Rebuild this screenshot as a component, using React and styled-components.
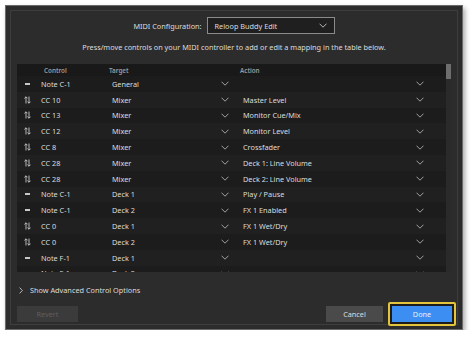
import React from 'react'
import styled, { createGlobalStyle } from 'styled-components'

const rowHeight = 15.8
const textSize = '7.3px'

const rows = [
  { kind: 'note', control: 'Note C-1', target: 'General', action: '' },
  { kind: 'cc', control: 'CC 10', target: 'Mixer', action: 'Master Level' },
  { kind: 'cc', control: 'CC 13', target: 'Mixer', action: 'Monitor Cue/Mix' },
  { kind: 'cc', control: 'CC 12', target: 'Mixer', action: 'Monitor Level' },
  { kind: 'cc', control: 'CC 8', target: 'Mixer', action: 'Crossfader' },
  { kind: 'cc', control: 'CC 28', target: 'Mixer', action: 'Deck 1: Line Volume' },
  { kind: 'cc', control: 'CC 28', target: 'Mixer', action: 'Deck 2: Line Volume' },
  { kind: 'note', control: 'Note C-1', target: 'Deck 1', action: 'Play / Pause' },
  { kind: 'note', control: 'Note C-1', target: 'Deck 2', action: 'FX 1 Enabled' },
  { kind: 'cc', control: 'CC 0', target: 'Deck 1', action: 'FX 1 Wet/Dry' },
  { kind: 'cc', control: 'CC 0', target: 'Deck 2', action: 'FX 1 Wet/Dry' },
  { kind: 'note', control: 'Note F-1', target: 'Deck 1', action: '' },
  { kind: 'note', control: 'Note F-1', target: 'Deck 2', action: '' },
]

const GlobalStyle = createGlobalStyle`
  html, body {
    margin: 0;
    background: #ffffff;
  }
  body {
    font-family: "Noto Sans", "Open Sans", sans-serif;
  }
`

const Page = styled.div`
  padding: 5px 0 0 5px;
`

const Window = styled.div`
  box-sizing: border-box;
  width: 458px;
  height: 325px;
  padding: 4px;
  background: #2c2c2c;
  border: 1px solid #6a6a6a;
  box-shadow: 2px 3px 5px rgba(0, 0, 0, 0.35);
`

const Frame = styled.div`
  box-sizing: border-box;
  height: 100%;
  border: 1px solid #3e3e3e;
  padding: 6px 6px 0 6px;
  display: flex;
  flex-direction: column;
  color: #dcdcdc;
`

const ConfigRow = styled.div`
  display: flex;
  justify-content: center;
  align-items: center;
  gap: 5px;
  font-size: ${textSize};
`

const Select = styled.div`
  box-sizing: border-box;
  width: 128px;
  height: 17px;
  border: 1px solid #8a8a8a;
  background: #1f1f1f;
  display: flex;
  align-items: center;
  justify-content: space-between;
  padding: 0 7px 0 7px;
  font-size: ${textSize};
`

const Hint = styled.div`
  margin-top: 8px;
  text-align: center;
  font-size: ${textSize};
  line-height: 11px;
`

const Table = styled.div`
  flex: none;
  margin-top: 11px;
  height: 208px;
  display: flex;
  background: #1d1d1d;
  overflow: hidden;
`

const TableBody = styled.div`
  flex: 1;
  display: flex;
  flex-direction: column;
`

const HeaderRow = styled.div`
  display: grid;
  grid-template-columns: 24px 65px 131px 1fr;
  height: 12px;
  flex: none;
  align-items: center;
  background: #191919;
  color: #9a9a9a;
  font-size: 6.3px;
  font-weight: 600;
  padding-left: 3px;
`

const Row = styled.div`
  display: grid;
  grid-template-columns: 24px 71px 117px 14px 181px 1fr;
  height: ${rowHeight}px;
  flex: none;
  align-items: center;
  font-size: ${textSize};
  background: ${p => (p.$odd ? '#202020' : '#1c1c1c')};
`

const IconCell = styled.div`
  display: flex;
  padding-left: 7px;
`

const PickCell = styled.div`
  display: flex;
  align-items: center;
  justify-content: space-between;
  white-space: nowrap;
`

const Scrollbar = styled.div`
  width: 5px;
  background: #2a2a2a;
`

const Thumb = styled.div`
  height: 15px;
  background: #6e6e6e;
`

const Advanced = styled.div`
  margin-top: 13px;
  display: flex;
  align-items: center;
  gap: 7px;
  font-size: ${textSize};
  padding-left: 2px;
`

const Buttons = styled.div`
  margin-top: 7px;
  margin-right: -5px;
  display: flex;
  align-items: center;
`

const Button = styled.div`
  box-sizing: border-box;
  width: ${p => p.$w}px;
  height: 16px;
  display: flex;
  align-items: center;
  justify-content: center;
  font-size: ${textSize};
  background: ${p => p.$bg};
  color: ${p => p.$fg};
`

const Focus = styled.div`
  margin-left: 5px;
  padding: 2px;
  border: 2px solid #e3c43c;
  border-radius: 2px;
  background: #1c1c1c;
`

const Spacer = styled.div`
  flex: 1;
`

function Chevron({ color = '#b0b0b0' }) {
  return (
    <svg width="8" height="5" viewBox="0 0 8 5">
      <path d="M0.5 0.7 L4 4.2 L7.5 0.7" fill="none" stroke={color} strokeWidth="0.9" />
    </svg>
  )
}

function RightChevron() {
  return (
    <svg width="4" height="7" viewBox="0 0 4 7">
      <path d="M0.6 0.6 L3.4 3.5 L0.6 6.4" fill="none" stroke="#c8c8c8" strokeWidth="0.9" />
    </svg>
  )
}

function KindIcon({ kind }) {
  if (kind === 'note') {
    return (
      <svg width="7" height="6" viewBox="0 0 7 6">
        <rect x="1" y="2" width="5" height="2" fill="#c8c8c8" />
      </svg>
    )
  }
  return (
    <svg width="7" height="8" viewBox="0 0 7 8">
      <path d="M2 7.5 V0.8 M0.4 2.4 L2 0.8 L3.6 2.4" fill="none" stroke="#c8c8c8" strokeWidth="0.9" />
      <path d="M5 0.5 V7.2 M3.4 5.6 L5 7.2 L6.6 5.6" fill="none" stroke="#c8c8c8" strokeWidth="0.9" />
    </svg>
  )
}

export default function App() {
  return (
    <Page>
      <GlobalStyle />
      <Window>
        <Frame>
          <ConfigRow>
            <span>MIDI Configuration:</span>
            <Select>
              <span>Reloop Buddy Edit</span>
              <Chevron color="#c8c8c8" />
            </Select>
          </ConfigRow>

          <Hint>Press/move controls on your MIDI controller to add or edit a mapping in the table below.</Hint>

          <Table>
            <TableBody>
              <HeaderRow>
                <span />
                <span>Control</span>
                <span>Target</span>
                <span>Action</span>
              </HeaderRow>
              {rows.map((r, i) => (
                <Row key={i} $odd={i % 2 === 1}>
                  <IconCell>
                    <KindIcon kind={r.kind} />
                  </IconCell>
                  <span>{r.control}</span>
                  <PickCell>
                    <span>{r.target}</span>
                    <Chevron />
                  </PickCell>
                  <span />
                  <PickCell>
                    <span>{r.action}</span>
                    <Chevron />
                  </PickCell>
                  <span />
                </Row>
              ))}
            </TableBody>
            <Scrollbar>
              <Thumb />
            </Scrollbar>
          </Table>

          <Advanced>
            <RightChevron />
            <span>Show Advanced Control Options</span>
          </Advanced>

          <Buttons>
            <Button $w={61} $bg="#3b3b3b" $fg="#5e5e5e">Revert</Button>
            <Spacer />
            <Button $w={57} $bg="#4a4a4a" $fg="#dedede">Cancel</Button>
            <Focus>
              <Button $w={60} $bg="#3d8ef2" $fg="#e8f1ff">Done</Button>
            </Focus>
          </Buttons>
        </Frame>
      </Window>
    </Page>
  )
}
